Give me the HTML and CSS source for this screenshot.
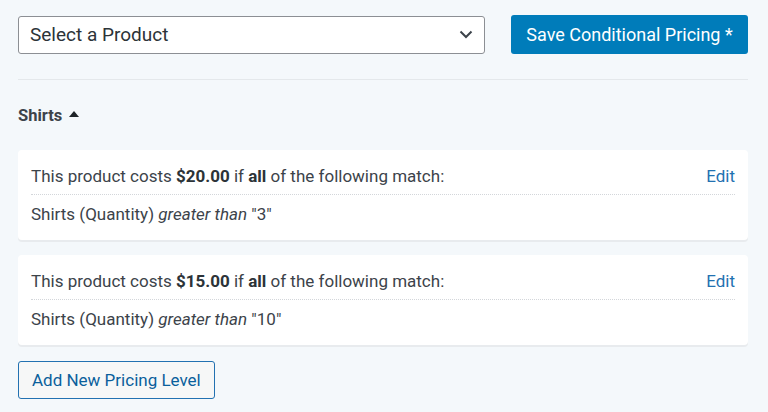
FILE: index.html
```html
<!DOCTYPE html>
<html>
<head>
<meta charset="utf-8">
<link rel="stylesheet" href="styles.css">
</head>
<body>
<div class="page">
  <div class="toolbar">
    <div class="select">
      <span>Select a Product</span>
      <svg class="chev" width="14" height="9" viewBox="0 0 14 9"><path d="M1.5 1.5 L7 7 L12.5 1.5" fill="none" stroke="#3c434a" stroke-width="2"/></svg>
    </div>
    <button class="btn-primary">Save Conditional Pricing *</button>
  </div>
  <hr class="divider">
  <div class="group-title">Shirts <span class="caret"></span></div>
  <div class="card">
    <div class="row">
      <span>This product costs <b>$20.00</b> if <b>all</b> of the following match:</span>
      <a class="edit">Edit</a>
    </div>
    <div class="cond">Shirts (Quantity) <i>greater than</i> "3"</div>
  </div>
  <div class="card">
    <div class="row">
      <span>This product costs <b>$15.00</b> if <b>all</b> of the following match:</span>
      <a class="edit">Edit</a>
    </div>
    <div class="cond">Shirts (Quantity) <i>greater than</i> "10"</div>
  </div>
  <button class="btn-secondary">Add New Pricing Level</button>
</div>
</body>
</html>
```
FILE: styles.css
```css
html, body {
  margin: 0;
  padding: 0;
  background: #f4f8fb;
  font-family: Roboto, "Liberation Sans", sans-serif;
  color: #3c434a;
}
.page {
  width: 730px;
  padding: 15px 20px 0 18px;
}
.toolbar {
  display: flex;
  align-items: center;
  gap: 26px;
}
.select {
  flex: 0 0 467px;
  box-sizing: border-box;
  height: 38px;
  border: 1px solid #8c8f94;
  border-radius: 3px;
  background: #fff;
  display: flex;
  align-items: center;
  justify-content: space-between;
  padding: 0 11px 0 11px;
  font-size: 19px;
  color: #2c3338;
}
.chev { display: block; }
.btn-primary {
  flex: 1;
  height: 39px;
  border: 0;
  border-radius: 3px;
  background: #007cba;
  color: #fff;
  font-family: inherit;
  font-size: 18px;
  font-weight: 400;
  padding: 0;
}
.divider {
  border: 0;
  border-top: 1px solid #e4e8eb;
  margin: 25px 0 0 0;
}
.group-title {
  margin-top: 24px;
  height: 22px;
  display: flex;
  align-items: center;
  gap: 7px;
  font-size: 16.5px;
  font-weight: 700;
  color: #3c434a;
}
.caret {
  width: 0;
  height: 0;
  border-left: 5px solid transparent;
  border-right: 5px solid transparent;
  border-bottom: 6px solid #1d2327;
  margin-top: -2px;
}
.card {
  margin-top: 24px;
  background: #fff;
  border-radius: 4px;
  box-shadow: 0 2px 0 #e8ebee;
  padding: 14px 13px 14px 13px;
  font-size: 17px;
  line-height: 24px;
}
.card + .card { margin-top: 15px; }
.row {
  display: flex;
  justify-content: space-between;
  padding-bottom: 6px;
  border-bottom: 1px dotted #d3d6da;
}
.row b { font-weight: 700; color: #2c3338; }
.edit { color: #2271b1; cursor: pointer; }
.cond { margin-top: 7px; }
.btn-secondary {
  margin-top: 16px;
  height: 38px;
  padding: 0 13px;
  background: #f6f7f7;
  border: 1px solid #2271b1;
  border-radius: 3px;
  color: #0a5f9c;
  font-family: inherit;
  font-size: 17px;
}
```
